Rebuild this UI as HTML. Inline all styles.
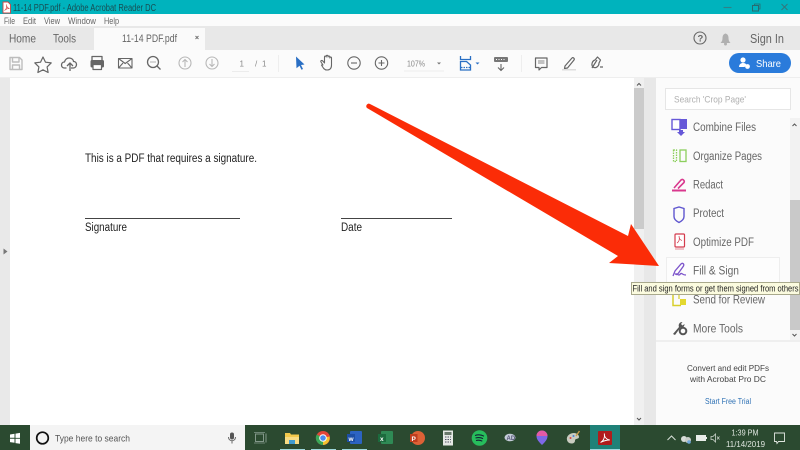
<!DOCTYPE html>
<html><head><meta charset="utf-8"><style>
html,body{margin:0;padding:0;width:800px;height:450px;overflow:hidden;background:#fff}
svg{display:block;filter:blur(.3px)}
text{font-family:"Liberation Sans",sans-serif}
</style></head><body>
<svg xmlns="http://www.w3.org/2000/svg" width="800" height="450" viewBox="0 0 800 450">
<rect width="800" height="14" fill="#00b3bd"/>
<rect y="14" width="800" height="12" fill="#fbfbfb"/>
<rect y="26" width="800" height="24" fill="#e8e8e8"/>
<rect x="94" y="28" width="111" height="23" fill="#fafafa"/>
<rect y="50" width="800" height="28" fill="#fbfbfb"/>
<rect y="77" width="800" height="1" fill="#eeeeee"/>
<rect y="78" width="10" height="347" fill="#e9e9e9"/>
<rect x="10" y="78" width="624" height="347" fill="#fff"/>
<rect x="634" y="78" width="10" height="347" fill="#f0f0f0"/>
<rect x="634" y="88" width="10" height="141" fill="#cbcbcb"/>
<rect x="644" y="78" width="12" height="347" fill="#e8e8e8"/>
<rect x="656" y="78" width="144" height="347" fill="#fbfbfb"/>

<!-- title -->
<path d="M3 2h5l2.500 2.500v8.500H3z" fill="#fff" stroke="#c44" stroke-width=".9"/>
<path d="M4.500 10.500c2-1 2.500-4 2-6 0 2 1 3.500 3 4-2 0-3.500 .5-5 2z" fill="none" stroke="#c33" stroke-width=".6"/>
<text x="13" y="11" font-size="10" fill="#174e54" textLength="143" lengthAdjust="spacingAndGlyphs">11-14 PDF.pdf - Adobe Acrobat Reader DC</text>
<path d="M723.500 7.500h8" stroke="#2f8288" stroke-width="1.100"/>
<rect x="752.500" y="5.500" width="6" height="5.500" fill="none" stroke="#276b70"/><path d="M754.500 5.500v-1.500h5.500v5h-1.500" fill="none" stroke="#276b70" stroke-width=".8"/>
<path d="M781.500 4l6 6M787.500 4l-6 6" stroke="#33777c" stroke-width="1"/>

<!-- menu -->
<g font-size="9" fill="#666">
<text x="4" y="24" textLength="11" lengthAdjust="spacingAndGlyphs">File</text>
<text x="23" y="24" textLength="13" lengthAdjust="spacingAndGlyphs">Edit</text>
<text x="44" y="24" textLength="16" lengthAdjust="spacingAndGlyphs">View</text>
<text x="68" y="24" textLength="28" lengthAdjust="spacingAndGlyphs">Window</text>
<text x="104" y="24" textLength="15" lengthAdjust="spacingAndGlyphs">Help</text>
</g>

<!-- tabs -->
<text x="9" y="42.500" font-size="12" fill="#666" textLength="27" lengthAdjust="spacingAndGlyphs">Home</text>
<text x="53" y="42.500" font-size="12" fill="#666" textLength="23" lengthAdjust="spacingAndGlyphs">Tools</text>
<text x="122" y="42" font-size="11" fill="#666" textLength="55" lengthAdjust="spacingAndGlyphs">11-14 PDF.pdf</text>
<path d="M195.500 36l3 3M198.500 36l-3 3" stroke="#777" stroke-width="1"/>
<circle cx="700" cy="38" r="6" fill="none" stroke="#666" stroke-width="1.100"/>
<text x="697.500" y="41.500" font-size="9.500" font-weight="bold" fill="#666">?</text>
<path d="M720.500 43c1.500-1.500 2-3 2-5 0-2.500 1-4 3-4.500 2 .5 3 2 3 4.500 0 2 .5 3.500 2 5z" fill="#b0b0b0"/><circle cx="725.500" cy="44" r="1.500" fill="#b0b0b0"/>
<text x="750" y="43" font-size="12.500" fill="#666" textLength="34" lengthAdjust="spacingAndGlyphs">Sign In</text>

<!-- toolbar left -->
<g fill="none" stroke-linejoin="round">
<g stroke="#bdbdbd" stroke-width="1.400"><path d="M10 57.500h9.500l2.500 2.500v9.500H10z"/><path d="M12.500 58v4h6.500v-4M12.500 69v-4h7v4"/></g>
<path d="M43 57l2.500 5.200 5.700.7-4.100 4 1 5.600-5.100-2.700-5.100 2.700 1-5.600-4.100-4 5.700-.7z" stroke="#666" stroke-width="1.200"/>
<g stroke="#666" stroke-width="1.300"><path d="M66.500 68h-2c-2 0-3-1.500-3-3 0-1.500 1-3 3-3 .5-2.500 2.500-4 4.500-4 3 0 4.500 2 4.500 3.500 2 0 3 1.500 3 3 0 2-1.500 3.500-3 3.500h-2.500"/><path d="M70 71v-8M67 66l3-3 3 3"/></g>
<g><path d="M92 60.500v-4h10v4" stroke="#666" stroke-width="1.300"/><rect x="90.500" y="60" width="13.500" height="7.500" rx="1.500" fill="#666"/><rect x="93" y="64.500" width="8.500" height="5" fill="#fff" stroke="#666" stroke-width="1.200"/></g>
<g stroke="#666" stroke-width="1.100"><rect x="118.500" y="58.500" width="13.500" height="9.500"/><path d="M118.500 58.500l6.700 5 6.800-5M118.500 68l4.500-5M132 68l-4.500-5"/></g>
<g stroke="#666" stroke-width="1.300"><circle cx="153" cy="62" r="5.500"/><path d="M157 66l3.500 3.500"/></g>
<path d="M150.500 62h1M152.500 62h1M154.500 62h1" stroke="#666"/>
<g stroke="#b8b8b8" stroke-width="1.100"><circle cx="185" cy="63" r="6"/><path d="M185 67v-7.500M182.500 62l2.500-2.500 2.500 2.500"/><circle cx="212" cy="63" r="6"/><path d="M212 59v7.500M209.500 64l2.500 2.500 2.500-2.500"/></g>
</g>
<text x="239.500" y="66.500" font-size="8" fill="#888">1</text>
<rect x="232" y="71" width="17" height="1" fill="#ececec"/>
<text x="255" y="66.500" font-size="8" fill="#888">/</text>
<text x="262" y="66.500" font-size="8" fill="#888">1</text>
<rect x="278" y="55" width="1" height="17" fill="#eeeeee"/>
<path d="M296 56.500l8.500 8-3.500.5 2 4-1.500 .7-2-4-3 2.500z" fill="#2a6fc4"/>
<g fill="none" stroke="#666" stroke-width="1.100" stroke-linejoin="round">
<path d="M323 65l-2-3c-.8-1.200.8-2.200 1.800-1l1.700 2v-6c0-1.300 1.700-1.300 1.700 0v-.7c0-1.300 1.800-1.300 1.800 0v.7c0-1.200 1.800-1.200 1.800 0v1c0-1.200 1.700-1.200 1.700 0v7c0 3-1.500 5-4.500 5-2.500 0-3.500-1.500-5.500-5z"/>
<circle cx="354" cy="63" r="6.200"/><path d="M351 63h6"/>
<circle cx="381.500" cy="63" r="6.200"/><path d="M378.500 63h6M381.500 60v6"/>
</g>
<text x="407" y="66.500" font-size="8.500" fill="#888" textLength="18" lengthAdjust="spacingAndGlyphs">107%</text>
<path d="M437 62.500h4l-2 2z" fill="#777"/>
<rect x="404" y="70.500" width="40" height="1" fill="#ececec"/>
<g fill="none" stroke="#2a6fc4" stroke-width="1.300">
<path d="M460.500 56v3.500h10V56"/><path d="M460.500 70v-8.500h6l4 3.500v5z"/>
<path d="M461 67.500h9" stroke-dasharray="1.500 1"/>
</g>
<path d="M475.500 62.500h4l-2 2z" fill="#2a6fc4"/>
<rect x="494" y="57" width="14" height="5" rx="1" fill="#777"/>
<path d="M496 59.500h1M498.500 59.500h1M501 59.500h1M503.500 59.500h1" stroke="#fff"/>
<path d="M501 64v6M498 67.500l3 3 3-3" fill="none" stroke="#666" stroke-width="1.100"/>
<rect x="521" y="55" width="1" height="17" fill="#eeeeee"/>
<g fill="none" stroke="#666" stroke-width="1.200" stroke-linejoin="round">
<path d="M535.500 58h11.500v9.500h-5.500l-2.500 2.500v-2.500h-3.500z"/><path d="M538 61h6.500M538 63h6.500" stroke-width=".7"/>
<path d="M565 66l7-8c1-1 3 .5 2 2l-6.500 8-3 .5z"/>
<path d="M593 67c-2-2-1-6 2-7l2.500-3 3 3-1.500 3c0 3-3 6-6 4z"/><path d="M597 60l-5 8M600 67h3"/>
</g>
<rect x="562" y="69" width="14" height="1.500" fill="#ddd"/>

<!-- share -->
<rect x="729" y="53" width="62" height="20" rx="10" fill="#2a7bdb"/>
<circle cx="743" cy="60" r="2.600" fill="#fff"/><path d="M739 67c0-2.800 2-4 4-4s3 .6 3.500 2l-2 2z" fill="#fff"/><circle cx="747.500" cy="66.500" r="2.400" fill="#fff"/>
<text x="756" y="67" font-size="10.500" fill="#fff" textLength="25" lengthAdjust="spacingAndGlyphs">Share</text>

<!-- scroll carets -->
<path d="M637 85.500l2-2 2 2" fill="none" stroke="#555" stroke-width="1"/>
<path d="M637 418l2 2 2-2" fill="none" stroke="#555" stroke-width="1"/>
<path d="M3.500 248.500l4 3-4 3z" fill="#777"/>

<!-- document -->
<g fill="#222">
<text x="85" y="162" font-size="11.500" textLength="172" lengthAdjust="spacingAndGlyphs">This is a PDF that requires a signature.</text>
<text x="85" y="231" font-size="11.500" textLength="42" lengthAdjust="spacingAndGlyphs">Signature</text>
<text x="341" y="231" font-size="11.500" textLength="21" lengthAdjust="spacingAndGlyphs">Date</text>
</g>
<rect x="85" y="218" width="155" height="1" fill="#444"/>
<rect x="341" y="218" width="111" height="1" fill="#444"/>

<!-- right panel -->
<rect x="665.500" y="88.500" width="125" height="21" fill="#fff" stroke="#e6e6e6"/>
<text x="674" y="102.500" font-size="9.500" fill="#b0b0b0" textLength="72" lengthAdjust="spacingAndGlyphs">Search 'Crop Page'</text>
<rect x="790" y="118" width="10" height="222" fill="#f2f2f2"/>
<rect x="790" y="200" width="10" height="130" fill="#c9c9c9"/>
<path d="M792.500 126l2-2 2 2" fill="none" stroke="#555"/>
<path d="M792.500 334l2 2 2-2" fill="none" stroke="#555"/>
<rect x="666.500" y="257.500" width="113" height="30" fill="#fdfdfd" stroke="#eeeeee"/>
<rect x="656" y="340" width="144" height="2" fill="#efefef"/>
<g font-size="11.500" fill="#666">
<text x="693" y="131" textLength="63" lengthAdjust="spacingAndGlyphs">Combine Files</text>
<text x="693" y="160" textLength="69" lengthAdjust="spacingAndGlyphs">Organize Pages</text>
<text x="693" y="188.500" textLength="30" lengthAdjust="spacingAndGlyphs">Redact</text>
<text x="693" y="217" textLength="31" lengthAdjust="spacingAndGlyphs">Protect</text>
<text x="693" y="246" textLength="61" lengthAdjust="spacingAndGlyphs">Optimize PDF</text>
<text x="693" y="274.500" textLength="46" lengthAdjust="spacingAndGlyphs">Fill &amp; Sign</text>
<text x="693" y="303.500" textLength="72" lengthAdjust="spacingAndGlyphs">Send for Review</text>
<text x="693" y="332.500" textLength="50" lengthAdjust="spacingAndGlyphs">More Tools</text>
</g>
<!-- tool icons -->
<rect x="672" y="119.500" width="8" height="10" fill="#fff" stroke="#6658d8" stroke-width="1.400"/>
<path d="M680 119h7v10h-7z" fill="#6658d8"/><path d="M679 130h4v2h2l-4 4-4-4h2z" fill="#6658d8"/>
<g fill="none" stroke="#8ccf5c" stroke-width="1.300"><rect x="680" y="150" width="6" height="11.500"/><path d="M673.500 150h3v11.500h-3z" stroke-dasharray="1.500 1"/></g>
<path d="M672 190.500h14" stroke="#d9388e" stroke-width="2"/>
<path d="M674 188l7-8c1.500-1.500 4 .5 3 2.500l-6 6" fill="none" stroke="#d9388e" stroke-width="1.600"/>
<path d="M674 208.500l5-1.500 5 1.500v8c0 3-3 5-5 6-2-1-5-3-5-6z" fill="none" stroke="#5f56cf" stroke-width="1.400"/>
<rect x="675" y="234" width="9.500" height="13" rx="1" fill="#fff" stroke="#d43b4d" stroke-width="1.200"/>
<path d="M677 243c2-1 3-4 2-7 0 2 1 4 3 4.500" fill="none" stroke="#d43b4d" stroke-width=".7"/><path d="M675 249h9" stroke="#e58a94" stroke-width="1"/>
<path d="M673 276l2-5 6-7c1.500-1.500 3.500 0 2.500 2l-5 7c-1 1.500-2.500 2-3 1 2-.5 2 1 3.500 1 1.500 0 1-2 2.500-1.500s1.500 1.500 4.500 1.500" fill="none" stroke="#7d55cb" stroke-width="1.300"/>
<path d="M673 293v12.500h8" fill="none" stroke="#d8cf2c" stroke-width="1.500"/><path d="M673 294h6v5" fill="none" stroke="#d8cf2c" stroke-width="1.200"/><rect x="680" y="299" width="6" height="6" fill="#e3d82f"/>
<path d="M673 334l6-7c-1-2.500 .5-5 3.500-5l-1.500 2 1.500 1.500 2-1.500c0 3-2 4-4 3.500l-5.500 7.500z" fill="#555"/>
<circle cx="683" cy="331" r="3.300" fill="none" stroke="#555" stroke-width="2"/>

<!-- bottom panel -->
<text x="687" y="371" font-size="8.500" fill="#444" textLength="82" lengthAdjust="spacingAndGlyphs">Convert and edit PDFs</text>
<text x="690" y="382" font-size="8.500" fill="#444" textLength="76" lengthAdjust="spacingAndGlyphs">with Acrobat Pro DC</text>
<text x="705" y="404" font-size="8" fill="#2f72b5" textLength="46" lengthAdjust="spacingAndGlyphs">Start Free Trial</text>

<!-- arrow -->
<path d="M367 104.500c1-1 2-1 3-.5L628 236l3-12 28 42-50-3 9-7L367 108c-1-1-1-2.500 0-3.500z" fill="#fb2c07"/>

<!-- tooltip -->
<rect x="631.500" y="282.500" width="168" height="12" fill="#fbfbdf" stroke="#a9a98c"/>
<text x="632.500" y="291.500" font-size="9" fill="#222" textLength="166" lengthAdjust="spacingAndGlyphs">Fill and sign forms or get them signed from others</text>

<!-- taskbar -->
<rect y="425" width="800" height="25" fill="#2b4a30"/>
<rect x="30" y="425" width="215" height="25" fill="#f4f4f4"/>
<path d="M10 434.500l4.500-.7v4h-4.500zM15.500 433.600l4.500-.7v5h-4.500zM10 438.800h4.500v4l-4.500-.7zM15.500 438.800h4.500v5l-4.500-.7z" fill="#fff"/>
<circle cx="42.500" cy="438" r="5.800" fill="none" stroke="#111" stroke-width="1.700"/>
<text x="55" y="441.500" font-size="9.500" fill="#555" textLength="75" lengthAdjust="spacingAndGlyphs">Type here to search</text>
<rect x="230" y="432.500" width="4" height="7" rx="2" fill="#555"/><path d="M228.500 437c0 5 7 5 7 0M232 441v2.500" fill="none" stroke="#666"/>
<g fill="none" stroke="#83988a"><rect x="255.500" y="434" width="8" height="7.500"/><path d="M266 433.500v9"/><path d="M254 432.500h11M254 443h11" stroke-width=".7"/></g>
<path d="M285 433h5l1 1.500h8v9.500h-14z" fill="#f2c94c"/><rect x="285" y="437" width="14" height="7" fill="#f7dc84"/><rect x="289" y="440" width="6" height="4" fill="#3f9bd0"/>
<circle cx="323" cy="438" r="7" fill="#e2463a"/><path d="M323 438l6.500-1.500A7 7 0 0 1 323 445z" fill="#f4c432"/><path d="M323 438v7a7 7 0 0 1-6.200-10.500z" fill="#3aa757"/><circle cx="323" cy="438" r="3.300" fill="#4b8df0" stroke="#fff" stroke-width="1"/>
<rect x="350" y="431" width="12" height="13" rx="1" fill="#2c63c2"/><rect x="347" y="434" width="8" height="8" fill="#1d4fa5"/>
<text x="348.500" y="441" font-size="6.500" font-weight="bold" fill="#fff">w</text>
<rect x="381" y="431" width="12" height="13" rx="1" fill="#2f8a55"/><rect x="378" y="434" width="8" height="8" fill="#1c6b3e"/>
<text x="380" y="441" font-size="6.500" font-weight="bold" fill="#fff">x</text>
<circle cx="418" cy="438" r="7" fill="#dd6136"/><rect x="410" y="434" width="7.500" height="8" fill="#bf3d1e"/>
<text x="411.500" y="441" font-size="6.500" font-weight="bold" fill="#fff">P</text>
<rect x="443" y="430.500" width="10" height="15" fill="#e4e8e4"/><rect x="444.500" y="432" width="7" height="3" fill="#68786a"/>
<path d="M445 437h1.500M447.500 437h1.500M450 437h1M445 439.500h1.500M447.500 439.500h1.500M450 439.500h1M445 442h1.500M447.500 442h1.500M450 442h1" stroke="#556"/>
<circle cx="479.500" cy="438" r="7.800" fill="#27bd5c"/>
<path d="M475 435.500c3-1 6.500-.7 9 .7M475.500 438c2.500-.7 5.500-.5 7.500 .7M476 440.500c2.200-.5 4.500-.3 6.300 .7" fill="none" stroke="#123" stroke-width="1.100"/>
<ellipse cx="510" cy="437.500" rx="5.500" ry="3.800" fill="#c4ccd8"/><text x="506.500" y="440" font-size="6" font-weight="bold" fill="#557">AD</text>
<path d="M542 445c-3-3-5.500-5.500-5.500-9a5.500 5.500 0 0 1 11 0c0 3.500-2.500 6-5.500 9z" fill="#7e68e6"/><path d="M536.500 436a5.500 5.500 0 0 1 5.500-5.500c3 0 5.500 2.500 5.500 5.500z" fill="#e45aa5"/>
<path d="M567 440c-1-4 3-7 7-7 3 0 5 2 5 4 0 2.500-4 1-4 3.500 0 2-1.500 3-3.500 3-2.500 0-4-1.500-4.500-3.500z" fill="#c9ccc0"/>
<circle cx="570.500" cy="438" r="1" fill="#d44"/><circle cx="573.500" cy="436" r="1" fill="#4a7fd4"/><path d="M576 436l3.500-5" stroke="#c89b4a" stroke-width="1.400"/>
<rect x="590" y="425" width="30" height="25" fill="#1f8178"/>
<rect x="598" y="431" width="14" height="14" rx="1" fill="#b01c1c"/>
<path d="M600.500 442.500c3-1.500 4.500-5 3.800-9 0 3.500 2 6 5.500 6.500-3.500 0-6.500 1-9.300 2.500z" fill="none" stroke="#fff" stroke-width=".9"/>
<g fill="#9fd8dc"><rect x="280" y="449" width="25" height="1"/><rect x="311" y="449" width="25" height="1"/><rect x="342" y="449" width="25" height="1"/><rect x="590" y="449" width="30" height="1"/></g>
<path d="M667.500 440l4-4 4 4" fill="none" stroke="#d8e0d8" stroke-width="1"/>
<circle cx="684" cy="439" r="3" fill="#d8dcd8"/><circle cx="688" cy="440" r="3" fill="#c8ccc8"/><circle cx="689" cy="442" r="1.800" fill="#6fa8dc"/>
<rect x="696" y="435" width="10" height="6" fill="#e8ece8"/><rect x="706" y="437" width="1" height="2" fill="#e8ece8"/>
<path d="M711 436.500h2l2.500-2.500v8l-2.500-2.500h-2z" fill="none" stroke="#cdd5cd" stroke-width=".8"/><path d="M717 436.500l2.500 3M719.500 436.500l-2.500 3" stroke="#cdd5cd" stroke-width=".7"/>
<text x="731.500" y="435.500" font-size="8.500" fill="#dfe6df" textLength="27" lengthAdjust="spacingAndGlyphs">1:39 PM</text>
<text x="726" y="447" font-size="8.500" fill="#dfe6df" textLength="39" lengthAdjust="spacingAndGlyphs">11/14/2019</text>
<path d="M774.500 433h10v8.500h-6l-1.500 2-.5-2h-2z" fill="none" stroke="#dfe6df" stroke-width=".9"/>
</svg>
</body></html>
